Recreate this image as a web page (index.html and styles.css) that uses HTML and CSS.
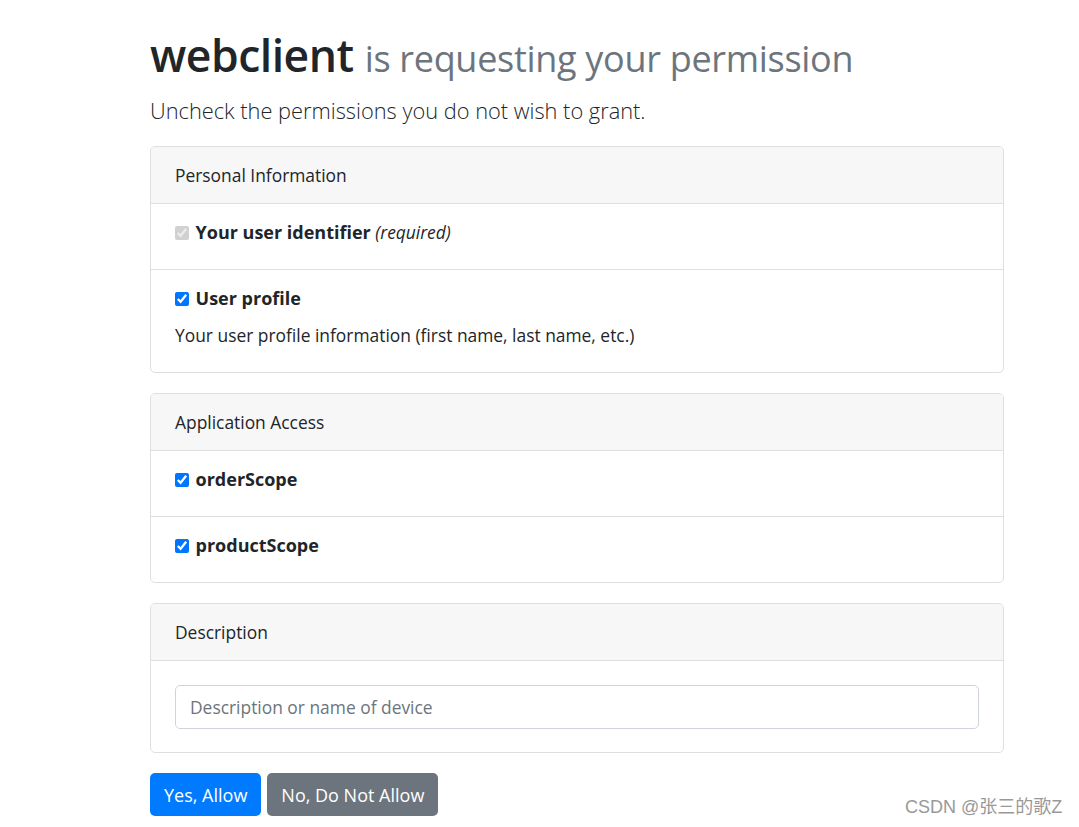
FILE: index.html
```html
<!DOCTYPE html>
<html>
<head>
    <title>Consent</title>
    <link rel="stylesheet" href="styles.css">
</head>
<body>
    <div class="page-consent">
        <div class="lead">
            <h1>webclient <small class="text-muted">is requesting your permission</small></h1>
            <p>Uncheck the permissions you do not wish to grant.</p>
        </div>

        <form>
            <div class="card">
                <div class="card-header">Personal Information</div>
                <ul class="list-group">
                    <li class="list-group-item">
                        <label><input type="checkbox" checked disabled> <strong>Your user identifier</strong></label>
                        <span><em>(required)</em></span>
                    </li>
                    <li class="list-group-item">
                        <label><input type="checkbox" checked> <strong>User profile</strong></label>
                        <div class="consent-description"><label>Your user profile information (first name, last name, etc.)</label></div>
                    </li>
                </ul>
            </div>

            <div class="card">
                <div class="card-header">Application Access</div>
                <ul class="list-group">
                    <li class="list-group-item">
                        <label><input type="checkbox" checked> <strong>orderScope</strong></label>
                    </li>
                    <li class="list-group-item">
                        <label><input type="checkbox" checked> <strong>productScope</strong></label>
                    </li>
                </ul>
            </div>

            <div class="card">
                <div class="card-header">Description</div>
                <div class="card-body">
                    <input class="form-control" type="text" placeholder="Description or name of device">
                </div>
            </div>

            <div class="buttons">
                <button type="button" class="btn btn-primary">Yes, Allow</button>
                <button type="button" class="btn btn-secondary">No, Do Not Allow</button>
            </div>
        </form>
    </div>
    <div class="watermark">CSDN @张三的歌Z</div>
</body>
</html>
```

FILE: styles.css
```css
body {
    margin: 0;
    font-family: "Open Sans", "Noto Sans", sans-serif;
    font-size: 17.4px;
    line-height: 28px;
    color: #212529;
    background: #fff;
}
.page-consent {
    width: 854px;
    margin-left: 150px;
}
h1 {
    margin: 0;
    padding-top: 27px;
    font-size: 44.5px;
    line-height: 56px;
    font-weight: 600;
    letter-spacing: -0.5px;
}
h1 small {
    font-size: 36px;
    font-weight: 400;
    letter-spacing: -0.3px;
}
.text-muted {
    color: #6c757d;
}
.lead p {
    margin: 6px 0 18px;
    font-size: 21.8px;
    line-height: 35px;
    font-weight: 300;
}
.card {
    border: 1px solid #dfdfdf;
    border-radius: 5px;
    margin-bottom: 20px;
    overflow: hidden;
}
.card-header {
    background: #f7f7f7;
    border-bottom: 1px solid #dfdfdf;
    padding: 14px 24px;
    line-height: 28px;
}
.list-group {
    list-style: none;
    margin: 0;
    padding: 0;
}
.list-group-item {
    padding: 14px 24px;
    border-top: 1px solid #dfdfdf;
}
.list-group-item:first-child {
    border-top: none;
}
.list-group-item label {
    display: inline-block;
    margin-bottom: 9px;
}
.list-group-item strong {
    font-size: 18px;
    font-weight: 700;
}
input[type=checkbox] {
    width: 14px;
    height: 14px;
    margin: 0 2px 0 0;
    vertical-align: -1px;
}
.card-body {
    padding: 24px 24px 23px;
}
.form-control {
    display: block;
    box-sizing: border-box;
    width: 100%;
    height: 44px;
    padding: 7px 14px;
    font-family: inherit;
    font-size: 17.4px;
    color: #495057;
    border: 1px solid #ced4da;
    border-radius: 5px;
    outline: none;
}
.form-control::placeholder {
    color: #6c757d;
}
.buttons {
    display: flex;
    gap: 6px;
}
.btn {
    height: 43px;
    padding: 0 14px;
    font-family: inherit;
    font-size: 18px;
    color: #fff;
    border: none;
    border-radius: 5px;
    cursor: pointer;
}
.btn-primary {
    background-color: #007bff;
}
.btn-secondary {
    background-color: #6c757d;
}
.watermark {
    position: absolute;
    left: 905px;
    top: 795px;
    font-family: "Liberation Sans", "Noto Sans CJK SC", sans-serif;
    font-size: 18px;
    line-height: 24px;
    color: #999;
}
```
